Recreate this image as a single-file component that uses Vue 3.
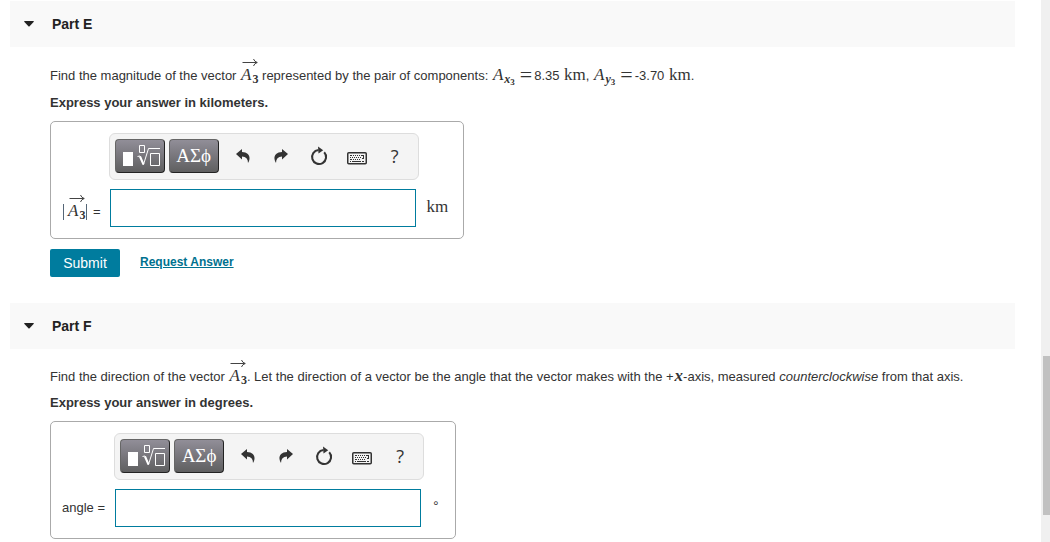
<script setup>
import { ref, h } from 'vue'

const answers = ref({ E: '', F: '' })

const VectorA3 = () =>
  h('span', { class: 'vec', role: 'math', 'aria-label': 'vector A3' }, [
    h('svg', { class: 'vec-arrow', viewBox: '0 0 16 9', 'aria-hidden': 'true' }, [
      h('path', { d: 'M0.5 4.5H15M11.5 1Q12.5 3.8 15.3 4.5Q12.5 5.2 11.5 8' })
    ]),
    h('i', 'A'),
    h('sub', '3')
  ])

const parts = [
  { id: 'E', instruction: 'Express your answer in kilometers.' },
  { id: 'F', instruction: 'Express your answer in degrees.' }
]
</script>

<template>
  <div class="page">
    <main class="content">
      <section v-for="part in parts" :key="part.id" class="part" :class="'part-' + part.id">
        <header class="part-header">
          <button class="toggle" type="button" :aria-label="'Collapse Part ' + part.id">
            <svg viewBox="0 0 10 6"><path d="M0 0.5Q0 0 1 0H9Q10 0 10 0.5L5.6 5.2Q5 5.8 4.4 5.2Z" /></svg>
          </button>
          <h2>Part {{ part.id }}</h2>
        </header>

        <div class="body">
          <p v-if="part.id === 'E'" class="question">
            Find the magnitude of the vector <VectorA3 /> represented by the pair of components:
            <span class="math"><i>A</i><sub><i>x</i><small>3</small></sub><span class="eq">=</span></span>8.35 <span class="math">km</span>,
            <span class="math"><i>A</i><sub><i>y</i><small>3</small></sub><span class="eq">=</span></span>-3.70 <span class="math">km</span>.
          </p>
          <p v-else class="question">
            Find the direction of the vector <VectorA3 />. Let the direction of a vector be the angle that the vector makes with the +<span class="math axis"><i>x</i></span>-axis, measured <em>counterclockwise</em> from that axis.
          </p>
          <p class="instruction">{{ part.instruction }}</p>

          <div class="answer">
            <label class="quantity" :for="'answer-' + part.id">
              <template v-if="part.id === 'E'"><span class="bar"></span><VectorA3 /><span class="bar"></span> =</template>
              <template v-else>angle =</template>
            </label>
            <div class="field">
              <div class="toolbar" role="toolbar" aria-label="Equation tools">
                <button class="palette" type="button" aria-label="Templates">
                  <svg class="templates" viewBox="0 0 50 34">
                    <path fill="#fff" stroke="none" d="M8 13h10v14H8z" />
                    <path d="M24.5 6.5h5v7h-5zM35.5 14.5h9v12h-9z" />
                    <path d="M22.5 17.5L25 17L28.5 25.5L33.5 9.5H45" />
                    <path d="M25 17.5L28.5 25.5" stroke-width="2" />
                  </svg>
                </button>
                <button class="palette greek" type="button">ΑΣϕ</button>
                <div class="tools">
                  <button class="tool" type="button" aria-label="Undo">
                    <svg width="14" height="16" viewBox="0 0 14 16"><path d="M0 6L6 1V4C11 4 14 7 13.5 11Q13.3 13 12 15Q12 9 6 8.6V11.5Z" /></svg>
                  </button>
                  <button class="tool" type="button" aria-label="Redo">
                    <svg width="14" height="16" viewBox="0 0 14 16"><path d="M14 6L8 1V4C3 4 0 7 0.5 11Q0.7 13 2 15Q2 9 8 8.6V11.5Z" /></svg>
                  </button>
                  <button class="tool" type="button" aria-label="Reset">
                    <svg width="18" height="20" viewBox="0 0 18 20">
                      <path class="ring" d="M8.5 4A7 7 0 1 0 14.2 6.2" />
                      <path d="M8 0.5L13.2 4.2L8.5 7.5Z" />
                    </svg>
                  </button>
                  <button class="tool" type="button" aria-label="Keyboard">
                    <svg class="keyboard" width="20" height="14" viewBox="0 0 20 14">
                      <rect class="case" x="0.75" y="1.75" width="18.5" height="11" rx="1" />
                      <path d="M3 4h2v1H3zM6 4h1v1H6zM8 4h1v1H8zM10 4h1v1h-1zM12 4h1v1h-1zM14 4h3v1h-3zM3 6h1v1H3zM5 6h1v1H5zM7 6h1v1H7zM9 6h1v1H9zM11 6h1v1h-1zM13 6h1v1h-1zM16 5h1v3h-2V7h1zM3 8h2v1H3zM6 8h1v1H6zM8 8h1v1H8zM10 8h1v1h-1zM12 8h1v1h-1zM3 10h1v1H3zM5 10h9v1H5zM15 10h2v1h-2z" />
                    </svg>
                  </button>
                  <button class="tool help" type="button" aria-label="Help">?</button>
                </div>
              </div>
              <input :id="'answer-' + part.id" v-model="answers[part.id]" type="text" />
            </div>
            <span v-if="part.id === 'E'" class="unit math">km</span>
            <span v-else class="unit degree" aria-label="degrees">∘</span>
          </div>

          <div v-if="part.id === 'E'" class="actions">
            <button class="submit" type="button">Submit</button>
            <a href="#request-answer">Request Answer</a>
          </div>
        </div>
      </section>
    </main>
    <div class="scrollbar" aria-hidden="true"><div class="thumb"></div></div>
  </div>
</template>

<style>
body {
  margin: 0;
  background: #fff;
}
</style>

<style scoped>
.page {
  display: flex;
  height: 100vh;
  overflow: hidden;
  color: #333;
  font: 13px/20px "Liberation Sans", Arial, sans-serif;
}
.content {
  flex: 1;
  padding: 1px 26px 0 10px;
}
.part-header {
  display: flex;
  align-items: center;
  gap: 18px;
  height: 46px;
  padding-left: 14px;
  background: #f9f9f9;
  color: #222;
}
.toggle {
  display: flex;
  padding: 0;
  border: 0;
  background: none;
  fill: #222;
}
.toggle svg {
  width: 10px;
  height: 6px;
}
h2 {
  margin: 0;
  font-size: 14px;
  line-height: 20px;
}
.body {
  padding: 18px 0 26px 40px;
}
p {
  margin: 0;
}
.question {
  white-space: nowrap;
}
.part-E .question {
  line-height: 22px;
}
.instruction {
  margin: 6px 0 8px;
  font-weight: bold;
}
.math,
:deep(.vec) {
  font-family: "Liberation Serif", "Times New Roman", serif;
  font-size: 17px;
  line-height: 0;
}
.question .math,
:deep(.vec) {
  margin-left: 1px;
}
.math sub,
:deep(.vec sub) {
  margin-left: 1px;
  font-size: 12px;
  font-weight: bold;
  line-height: 0;
  vertical-align: -3px;
}
.math small {
  font-size: 9px;
  vertical-align: -2px;
}
.axis {
  font-weight: bold;
}
.eq {
  margin: 0 2px 0 5px;
  font-size: 22px;
  vertical-align: -2px;
}
:deep(.vec) {
  position: relative;
}
:deep(.vec-arrow) {
  position: absolute;
  left: 1px;
  bottom: 17px;
  width: 16px;
  height: 9px;
  fill: none;
  stroke: #444;
  stroke-width: 1;
}
.answer {
  display: flex;
  width: fit-content;
  box-sizing: border-box;
  padding: 11px 15px 11px 11px;
  border: 1px solid #aaa;
  border-radius: 5px;
}
.quantity {
  padding: 65px 9px 0 0;
}
.part-E .quantity {
  padding: 69px 8px 0 1px;
}
.bar {
  display: inline-block;
  width: 1px;
  height: 16px;
  margin-right: 3px;
  background: #567;
  vertical-align: -4px;
}
:deep(.vec) + .bar {
  margin: 0 2px 0 1px;
}
.field {
  width: 310px;
}
.toolbar {
  display: flex;
  gap: 4px;
  height: 47px;
  box-sizing: border-box;
  padding: 5px 0 0 5px;
  border: 1px solid #ddd;
  border-radius: 6px;
  background: #f4f4f4;
}
.palette {
  width: 50px;
  height: 34px;
  padding: 0;
  border: 1px solid #222;
  border-top-color: #666;
  border-left-color: #666;
  border-radius: 4px;
  background: linear-gradient(#918e98, #5f5f60);
  color: #fff;
}
.templates {
  display: block;
  width: 50px;
  height: 34px;
  margin: -1px;
  fill: none;
  stroke: #fff;
  stroke-width: 1;
}
.greek {
  font: 19px/30px "Liberation Serif", "Times New Roman", serif;
}
.tools {
  display: flex;
  gap: 4px;
  margin-left: 3px;
}
.tool {
  display: flex;
  align-items: center;
  justify-content: center;
  width: 34px;
  height: 34px;
  padding: 0;
  border: 0;
  background: none;
  color: #333;
  fill: #333;
}
.tool .ring {
  fill: none;
  stroke: #333;
  stroke-width: 2;
}
.keyboard {
  margin-top: 4px;
}
.case {
  fill: none;
  stroke: #333;
  stroke-width: 1.5;
}
.help {
  font: 18px/20px "Open Sans", sans-serif;
}
input {
  display: block;
  width: 306px;
  height: 38px;
  box-sizing: border-box;
  margin: 9px 0 0 1px;
  padding: 0 8px;
  border: 1px solid #007c9e;
  border-radius: 0;
  background: #fff;
  font: inherit;
}
.unit {
  margin: 64px 0 0 8px;
  line-height: 20px;
}
.degree {
  font: 12px/12px "DejaVu Sans", sans-serif;
}
.actions {
  display: flex;
  gap: 20px;
  margin-top: 10px;
}
.submit {
  width: 70px;
  height: 28px;
  padding: 0;
  border: 0;
  border-radius: 2px;
  background: #007c9e;
  color: #fff;
  font: 14px/20px "Liberation Sans", Arial, sans-serif;
}
a {
  color: #00718f;
  font-size: 12px;
  font-weight: bold;
  line-height: 26px;
}
.scrollbar {
  width: 9px;
  padding: 356px 0 0 2px;
  box-sizing: border-box;
  background: #f0f0f0;
}
.thumb {
  height: 159px;
  background: #c1c1c1;
}
</style>
